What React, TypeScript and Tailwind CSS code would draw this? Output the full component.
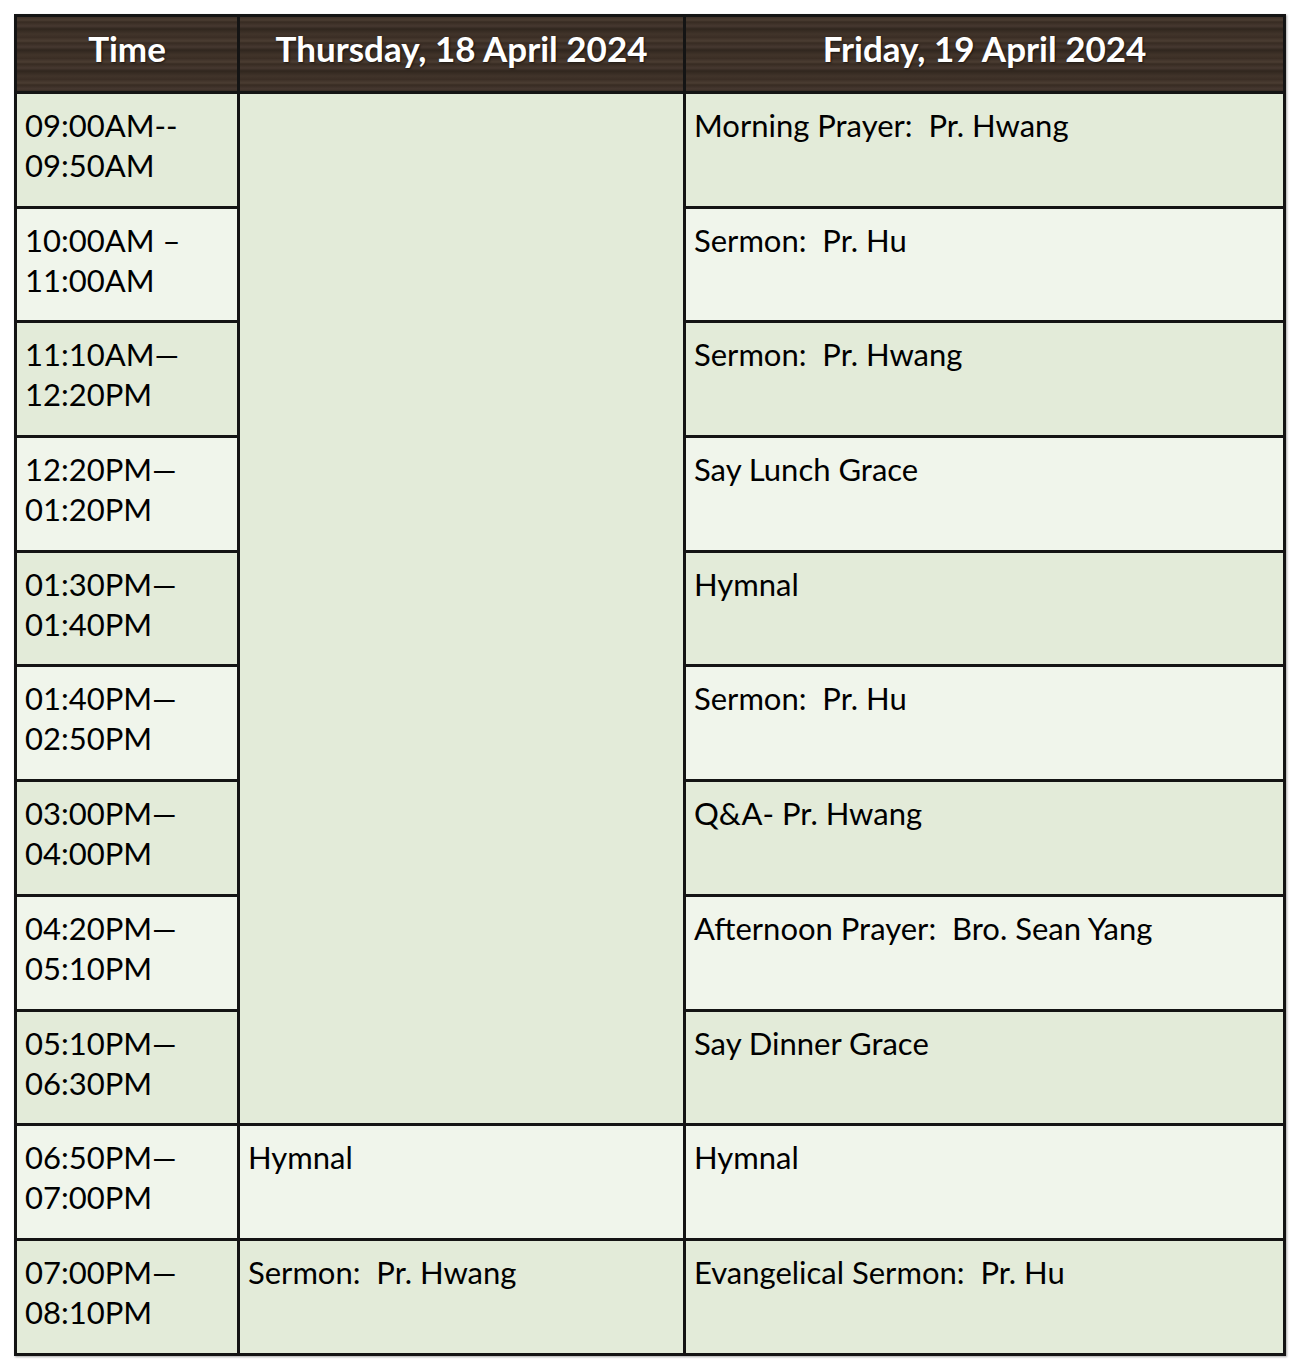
const ROWS = [
  { time: ['09:00AM--', '09:50AM'], fri: 'Morning Prayer:  Pr. Hwang' },
  { time: ['10:00AM –', '11:00AM'], fri: 'Sermon:  Pr. Hu' },
  { time: ['11:10AM—', '12:20PM'], fri: 'Sermon:  Pr. Hwang' },
  { time: ['12:20PM—', '01:20PM'], fri: 'Say Lunch Grace' },
  { time: ['01:30PM—', '01:40PM'], fri: 'Hymnal' },
  { time: ['01:40PM—', '02:50PM'], fri: 'Sermon:  Pr. Hu' },
  { time: ['03:00PM—', '04:00PM'], fri: 'Q&A- Pr. Hwang' },
  { time: ['04:20PM—', '05:10PM'], fri: 'Afternoon Prayer:  Bro. Sean Yang' },
  { time: ['05:10PM—', '06:30PM'], fri: 'Say Dinner Grace' },
  { time: ['06:50PM—', '07:00PM'], thu: 'Hymnal', fri: 'Hymnal' },
  { time: ['07:00PM—', '08:10PM'], thu: 'Sermon:  Pr. Hwang', fri: 'Evangelical Sermon:  Pr. Hu' },
];

// wood-grain header strip
const wood =
  'bg-[#3d3128] bg-[repeating-linear-gradient(180deg,#3e3128_0px,#4b3d32_3px,#372b22_5px,#463830_9px,#30261e_12px,#41342a_17px,#3a2d24_21px)]';

function Header({ children }: { children: React.ReactNode }) {
  return (
    <div className={`${wood} flex items-start justify-center pt-[9px] text-white font-bold text-[35px] leading-[44px] [text-shadow:1px_1px_2px_rgba(0,0,0,0.6)]`}>
      {children}
    </div>
  );
}

function Cell({ dark, children }: { dark: boolean; children?: React.ReactNode }) {
  return (
    <div
      className={`${dark ? 'bg-[#e3ebd9]' : 'bg-[#f0f5eb]'} px-[8px] pt-[11px] text-[31px] leading-[40px] text-black whitespace-pre-wrap`}
    >
      {children}
    </div>
  );
}

export default function App() {
  return (
    <div className="min-h-[1372px] bg-white pt-[14px] pl-[14px] font-['Lato','Noto_Sans',sans-serif]">
      <div className="grid w-[1272px] grid-cols-[220px_443px_597px] grid-rows-[74px_repeat(11,111.7px)] gap-[3px] bg-[#141414] p-[3px] shadow-[1px_1px_2px_rgba(0,0,0,0.35)]">
        <Header>Time</Header>
        <Header>Thursday, 18 April 2024</Header>
        <Header>Friday, 19 April 2024</Header>
        {ROWS.map((r, i) => {
          const dark = i % 2 === 0;
          return (
            <>
              <Cell key={`t${i}`} dark={dark}>
                {r.time[0]}
                <br />
                {r.time[1]}
              </Cell>
              {i === 0 && (
                <div key="thu-merged" className="row-span-9 bg-[#e3ebd9]" />
              )}
              {i >= 9 && (
                <Cell key={`h${i}`} dark={dark}>
                  {r.thu}
                </Cell>
              )}
              <Cell key={`f${i}`} dark={dark}>
                {r.fri}
              </Cell>
            </>
          );
        })}
      </div>
    </div>
  );
}
